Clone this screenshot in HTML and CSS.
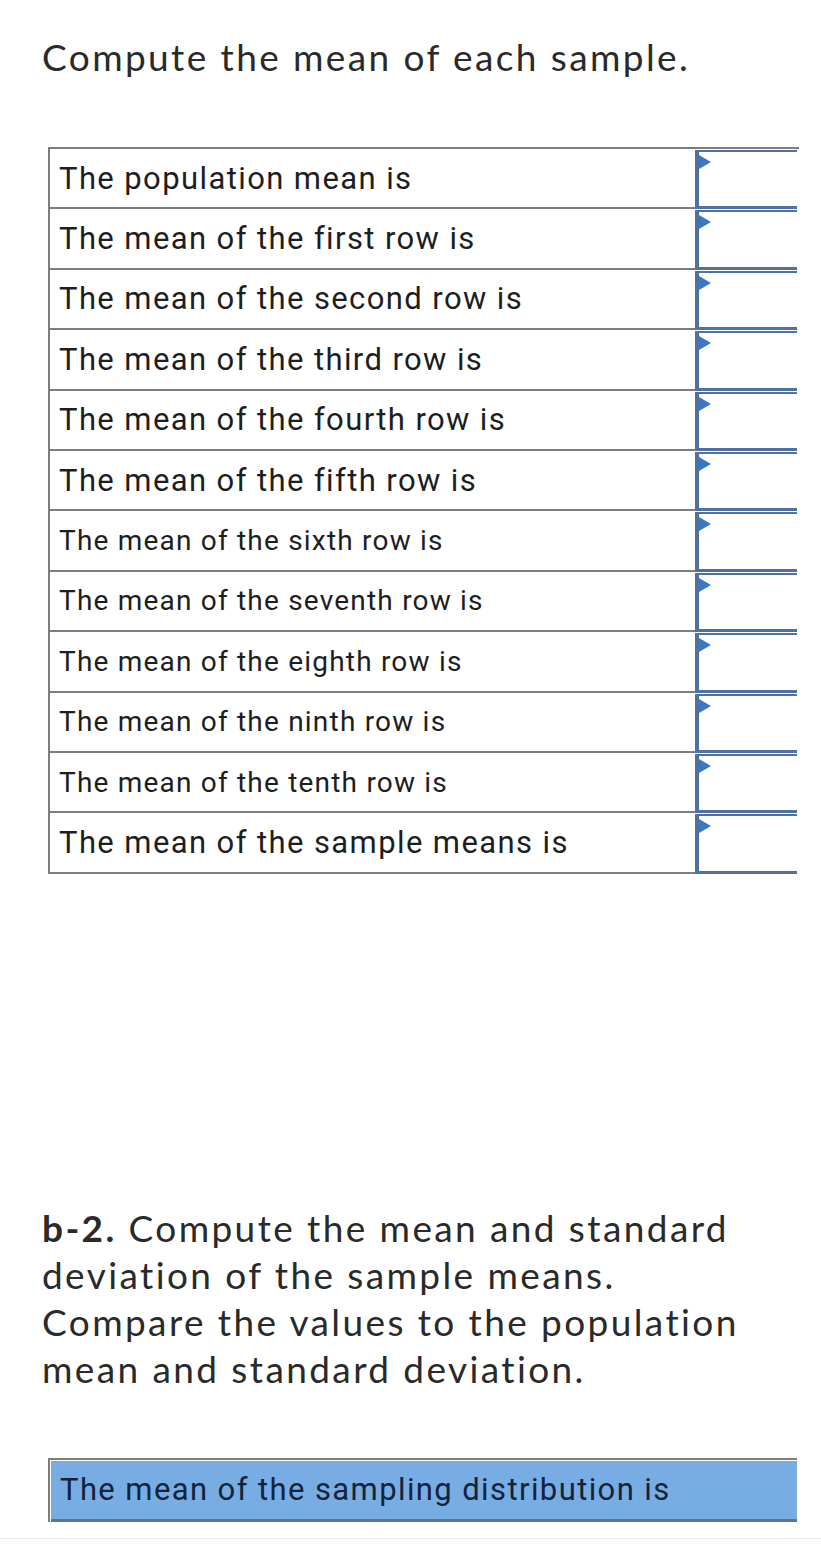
FILE: index.html
```html
<!DOCTYPE html>
<html>
<head>
<meta charset="utf-8">
<link rel="stylesheet" href="styles.css">
</head>
<body>
<div class="page">
  <h1 class="heading">Compute the mean of each sample.</h1>

  <div class="grid">
    <div class="row"><div class="label">The population mean is</div><div class="input"></div></div>
    <div class="row"><div class="label">The mean of the first row is</div><div class="input"></div></div>
    <div class="row"><div class="label">The mean of the second row is</div><div class="input"></div></div>
    <div class="row"><div class="label">The mean of the third row is</div><div class="input"></div></div>
    <div class="row"><div class="label">The mean of the fourth row is</div><div class="input"></div></div>
    <div class="row"><div class="label">The mean of the fifth row is</div><div class="input"></div></div>
    <div class="row"><div class="label small">The mean of the sixth row is</div><div class="input"></div></div>
    <div class="row"><div class="label small">The mean of the seventh row is</div><div class="input"></div></div>
    <div class="row"><div class="label small">The mean of the eighth row is</div><div class="input"></div></div>
    <div class="row"><div class="label small">The mean of the ninth row is</div><div class="input"></div></div>
    <div class="row"><div class="label small">The mean of the tenth row is</div><div class="input"></div></div>
    <div class="row"><div class="label">The mean of the sample means is</div><div class="input"></div></div>
  </div>

  <p class="question"><b>b-2.</b> Compute the mean and standard deviation of the sample means. Compare the values to the population mean and standard deviation.</p>

  <div class="answer">
    <div class="answer-row">The mean of the sampling distribution is</div>
  </div>
</div>
<div class="rule"></div>
</body>
</html>
```

FILE: styles.css
```css
html, body {
  margin: 0;
  padding: 0;
  background: #ffffff;
}

.page {
  padding: 0 0 0 42px;
}

.heading {
  margin: 0;
  padding-top: 34px;
  font-family: "Lato", "Open Sans", sans-serif;
  font-weight: 400;
  font-size: 37px;
  line-height: 46px;
  color: #2a2a2a;
  letter-spacing: 2.4px;
}

.grid {
  margin: 67px 0 0 6px;
  width: 749px;
  border-left: 2px solid #7d7d7d;
  border-top: 2px solid #7d7d7d;
}

.row {
  display: grid;
  grid-template-columns: 645px 102px;
  height: 60.4px;
  box-sizing: border-box;
}

.label {
  display: flex;
  align-items: center;
  padding-left: 9px;
  border-bottom: 2px solid #7d7d7d;
  font-family: "Roboto", "Liberation Sans", sans-serif;
  font-size: 31px;
  letter-spacing: 1.4px;
  color: #1e1e1e;
  white-space: nowrap;
}

.label.small {
  font-size: 28px;
  letter-spacing: 1.2px;
}

.input {
  position: relative;
  border-left: 4px solid #4f71a1;
  border-top: 2px solid #4f71a1;
  border-bottom: 3px solid #4f71a1;
  margin-top: 1px;
  background: #ffffff;
}

.input::before {
  content: "";
  position: absolute;
  left: 0;
  top: 3px;
  width: 0;
  height: 0;
  border-top: 7px solid transparent;
  border-bottom: 7px solid transparent;
  border-left: 12px solid #3a78c6;
}

.question {
  margin: 330px 0 0 0;
  width: 708px;
  font-family: "Lato", "Open Sans", sans-serif;
  font-size: 37px;
  line-height: 47px;
  color: #2a2a2a;
  letter-spacing: 2.4px;
}

.question b {
  font-weight: 700;
}

.answer {
  margin: 66px 0 0 6px;
  width: 749px;
  border-top: 2px solid #7d7d7d;
  border-left: 2px solid #7d7d7d;
  padding: 1px 0 0 1px;
  box-sizing: border-box;
}

.answer-row {
  background: #78ade4;
  height: 58px;
  border-bottom: 3px solid #5c7594;
  display: flex;
  align-items: center;
  padding-left: 9px;
  font-family: "Roboto", "Liberation Sans", sans-serif;
  font-size: 31px;
  letter-spacing: 1.4px;
  color: #13233a;
  white-space: nowrap;
}

.rule {
  margin-top: 16px;
  border-top: 1px solid #ececec;
}
```
